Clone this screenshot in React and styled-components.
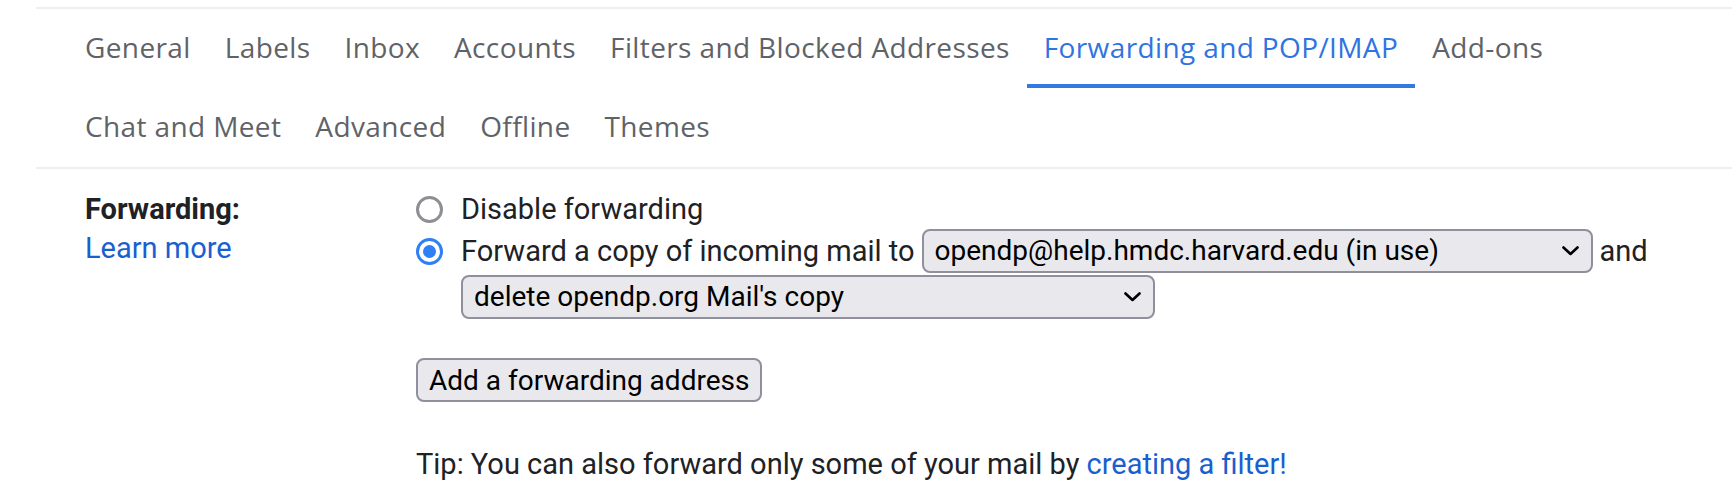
import React from 'react';
import styled, { createGlobalStyle } from 'styled-components';

const GlobalStyle = createGlobalStyle`
  html, body {
    margin: 0;
    padding: 0;
    background: #fff;
  }
  body {
    font-family: Roboto, 'Liberation Sans', Arial, sans-serif;
    color: #202124;
    -webkit-font-smoothing: antialiased;
  }
`;

const tabs = [
  'General',
  'Labels',
  'Inbox',
  'Accounts',
  'Filters and Blocked Addresses',
  'Forwarding and POP/IMAP',
  'Add-ons',
  'Chat and Meet',
  'Advanced',
  'Offline',
  'Themes',
];

const Page = styled.div`
  padding: 7px 0 0 36px;
`;

const TabBar = styled.nav`
  display: flex;
  flex-wrap: wrap;
  padding-left: 32px;
  border-top: 2px solid #eeeeee;
  border-bottom: 2px solid #eeeeee;
`;

const Tab = styled.a`
  position: relative;
  box-sizing: border-box;
  display: flex;
  align-items: center;
  height: 79px;
  padding: 0 17px 4px;
  font-family: 'Open Sans', Roboto, sans-serif;
  font-size: 28px;
  letter-spacing: 0.38px;
  color: ${(p) => (p.$active ? '#2f74e0' : '#5f6368')};
  text-decoration: none;
  white-space: nowrap;
  cursor: pointer;

  &::after {
    content: '';
    position: absolute;
    left: 0;
    right: 0;
    bottom: 0;
    height: 4px;
    background: ${(p) => (p.$active ? '#3479e0' : 'transparent')};
  }
`;

const Section = styled.div`
  display: grid;
  grid-template-columns: 331px 1fr;
  padding: 21px 0 0 49px;
`;

const LabelCol = styled.div`
  display: flex;
  flex-direction: column;
  font-size: 29px;
  line-height: 39px;
`;

const Title = styled.span`
  font-weight: 700;
  color: #202124;
`;

const Link = styled.a`
  color: #1a5fd0;
  text-decoration: none;
  cursor: pointer;
`;

const Options = styled.div`
  display: flex;
  flex-direction: column;
  font-size: 29px;
`;

const OptionRow = styled.label`
  display: flex;
  align-items: flex-start;
  gap: 18px;
`;

const RadioSlot = styled.span`
  display: flex;
  align-items: center;
  height: ${(p) => p.$h}px;
`;

const Radio = styled.span`
  box-sizing: border-box;
  width: 27px;
  height: 27px;
  border-radius: 50%;
  border: 3px solid ${(p) => (p.$checked ? '#2f7ff5' : '#8e8e93')};
  display: flex;
  align-items: center;
  justify-content: center;
  background: #fff;

  &::before {
    content: '';
    width: 13px;
    height: 13px;
    border-radius: 50%;
    background: ${(p) => (p.$checked ? '#2f7ff5' : 'transparent')};
  }
`;

const Text = styled.span`
  line-height: 39px;
  white-space: nowrap;
`;

const Flow = styled.div`
  display: flex;
  flex-wrap: wrap;
  align-items: center;
  column-gap: 7px;
  row-gap: 2px;
  line-height: 44px;
  padding-right: 40px;
`;

const SelectBox = styled.div`
  position: relative;
  box-sizing: border-box;
  width: ${(p) => p.$w}px;
  height: 44px;
  display: flex;
  align-items: center;
  padding: 0 40px 0 11px;
  background: #e9e9ed;
  border: 2px solid #8f8f9d;
  border-radius: 8px;
  color: #000;
  font-size: 28px;
  white-space: nowrap;
  cursor: default;

  svg {
    position: absolute;
    right: 12px;
    top: 50%;
    transform: translateY(-50%);
  }
`;

const Button = styled.button`
  align-self: flex-start;
  box-sizing: border-box;
  height: 44px;
  margin: 39px 0 0 0;
  padding: 0 11px;
  background: #e9e9ed;
  border: 2px solid #8f8f9d;
  border-radius: 8px;
  font-family: Roboto, sans-serif;
  font-size: 28px;
  color: #000;
  cursor: pointer;
`;

const Tip = styled.p`
  margin: 43px 0 0;
  line-height: 39px;
  white-space: nowrap;
`;

const Chevron = () => (
  <svg width="17" height="10" viewBox="0 0 17 10" fill="none">
    <path d="M1.5 1.5 L8.5 8 L15.5 1.5" stroke="#000" strokeWidth="2.6" strokeLinecap="round" strokeLinejoin="round" />
  </svg>
);

const Select = ({ width, children }) => (
  <SelectBox $w={width}>
    {children}
    <Chevron />
  </SelectBox>
);

export default function App() {
  return (
    <>
      <GlobalStyle />
      <Page>
        <TabBar>
          {tabs.map((t) => (
            <Tab key={t} $active={t === 'Forwarding and POP/IMAP'}>
              {t}
            </Tab>
          ))}
        </TabBar>

        <Section>
          <LabelCol>
            <Title>Forwarding:</Title>
            <Link>Learn more</Link>
          </LabelCol>

          <Options>
            <OptionRow>
              <RadioSlot $h={39}>
                <Radio />
              </RadioSlot>
              <Text>Disable forwarding</Text>
            </OptionRow>

            <OptionRow>
              <RadioSlot $h={44}>
                <Radio $checked />
              </RadioSlot>
              <Flow>
                <span>Forward a copy of incoming mail to</span>
                <Select width={671}>opendp@help.hmdc.harvard.edu (in use)</Select>
                <span>and</span>
                <Select width={694}>delete opendp.org Mail's copy</Select>
              </Flow>
            </OptionRow>

            <Button>Add a forwarding address</Button>

            <Tip>
              Tip: You can also forward only some of your mail by <Link>creating a filter!</Link>
            </Tip>
          </Options>
        </Section>
      </Page>
    </>
  );
}
